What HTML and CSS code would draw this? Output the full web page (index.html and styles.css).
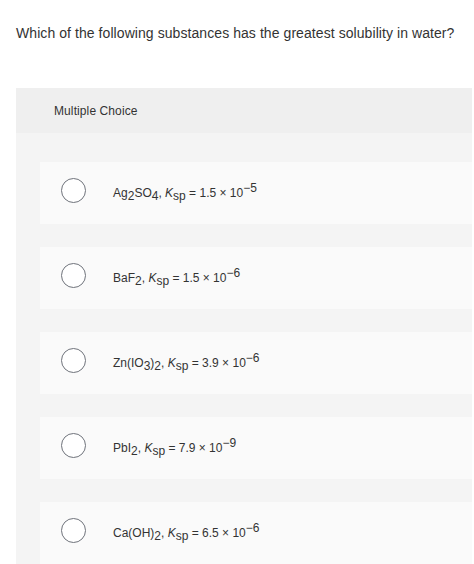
FILE: index.html
```html
<!DOCTYPE html>
<html>
<head>
<meta charset="utf-8">
<link rel="stylesheet" href="styles.css">
</head>
<body>
<p class="question">Which of the following substances has the greatest solubility in water?</p>
<div class="panel">
  <div class="panel-head">Multiple Choice</div>
  <div class="options">
    <div class="option"><span class="radio"></span><span class="label">Ag<sub>2</sub>SO<sub>4</sub>, <i>K</i><sub>sp</sub> = 1.5 × 10<sup>−5</sup></span></div>
    <div class="option"><span class="radio"></span><span class="label">BaF<sub>2</sub>, <i>K</i><sub>sp</sub> = 1.5 × 10<sup>−6</sup></span></div>
    <div class="option"><span class="radio"></span><span class="label">Zn(IO<sub>3</sub>)<sub>2</sub>, <i>K</i><sub>sp</sub> = 3.9 × 10<sup>−6</sup></span></div>
    <div class="option"><span class="radio"></span><span class="label">PbI<sub>2</sub>, <i>K</i><sub>sp</sub> = 7.9 × 10<sup>−9</sup></span></div>
    <div class="option"><span class="radio"></span><span class="label">Ca(OH)<sub>2</sub>, <i>K</i><sub>sp</sub> = 6.5 × 10<sup>−6</sup></span></div>
  </div>
</div>
</body>
</html>
```
FILE: styles.css
```css
html, body {
  margin: 0;
  padding: 0;
  background: #ffffff;
  font-family: "Liberation Sans", Arial, sans-serif;
  color: #333333;
}
.question {
  margin: 0;
  padding: 24px 16px 0;
  font-size: 14px;
  letter-spacing: 0.07px;
  line-height: 18px;
}
.panel {
  margin: 46px 0 0 16px;
  width: 456px;
  background: #f4f4f4;
}
.panel-head {
  height: 45px;
  display: flex;
  align-items: center;
  padding-left: 38px;
  background: #efefef;
  font-size: 12px;
  letter-spacing: 0.1px;
  color: #333333;
}
.options {
  display: flex;
  flex-direction: column;
  gap: 23px;
  padding: 29px 0 0 24px;
}
.option {
  height: 62px;
  box-sizing: border-box;
  background: #fafafa;
  display: flex;
  align-items: flex-start;
  padding-left: 21px;
}
.radio {
  flex: none;
  width: 25px;
  height: 25px;
  box-sizing: border-box;
  margin-top: 16px;
  border: 1.5px solid #6f737b;
  border-radius: 50%;
  background: #ffffff;
}
.label {
  margin: 23px 0 0 27px;
  font-size: 12px;
  line-height: 16px;
  color: #333333;
}
.label sub, .label sup {
  font-size: 12px;
  line-height: 0;
  position: relative;
  vertical-align: baseline;
}
.label sub {
  top: 3px;
}
.label sup {
  top: -5px;
}
```
